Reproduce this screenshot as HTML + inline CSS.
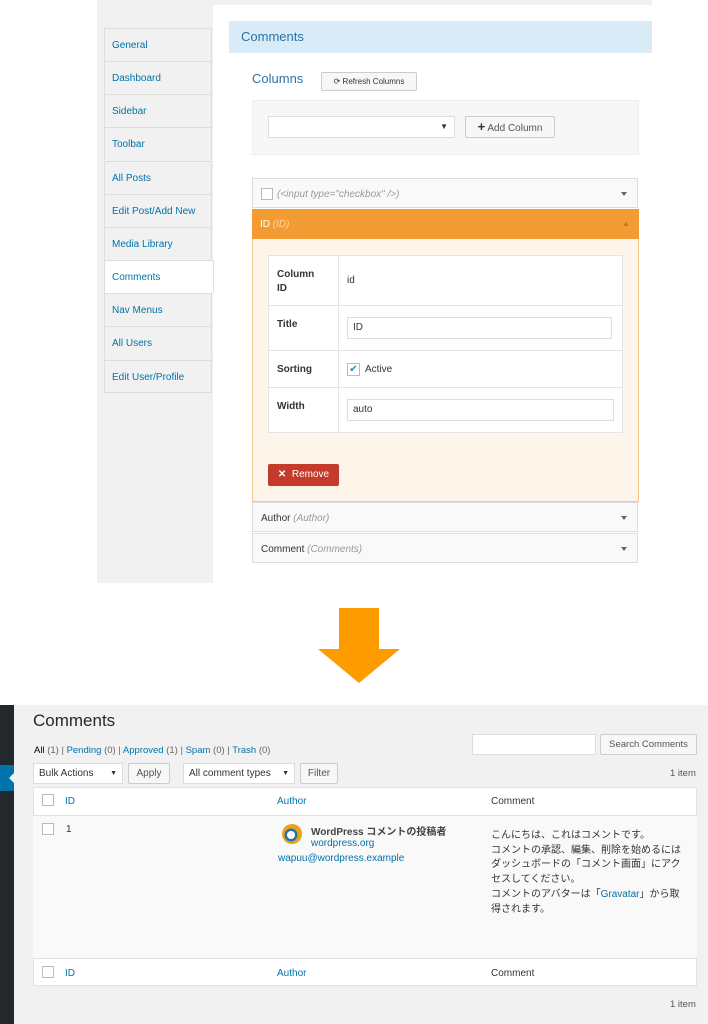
<!DOCTYPE html><html><head><meta charset="utf-8"><style>
body{margin:0;width:708px;height:1024px;position:relative;background:#fff;font-family:"Liberation Sans","Noto Sans CJK JP",sans-serif;font-size:10px;color:#333;overflow:hidden}
.a{position:absolute}
.menu{position:absolute;left:104px;width:108px;height:33px;border:1px solid #ddd;border-bottom:none;background:#f1f1f1;color:#0073aa;font-size:10px;line-height:34px;padding-left:7px;box-sizing:border-box}
.blue{color:#0073aa}
.btn{position:absolute;border:1px solid #ccc;background:#f7f7f7;border-radius:2px;box-sizing:border-box;font-size:10px;color:#555;text-align:center}
.inp{position:absolute;border:1px solid #ddd;background:#fff;box-sizing:border-box}
.cb{position:absolute;width:12px;height:12px;border:1px solid #bbb;background:#fff;box-sizing:border-box}
.row{position:absolute;left:252px;width:386px;height:30px;background:#f9f9f9;border:1px solid #ddd;box-sizing:border-box;font-size:10px;line-height:31px;padding-left:8px;color:#333}
.row i{color:#999}
.tri{position:absolute;right:10px;top:13px;width:0;height:0;border-left:3px solid transparent;border-right:3px solid transparent;border-top:4px solid #666}
td{border:1px solid #e5e5e5;font-size:10px;vertical-align:top}
</style></head><body>
<div class="a" style="left:97px;top:0;width:555px;height:583px;background:#f1f1f1"></div>
<div class="a" style="left:213px;top:5px;width:439px;height:578px;background:#fff"></div>
<div class="menu" style="top:28px">General</div>
<div class="menu" style="top:61px">Dashboard</div>
<div class="menu" style="top:94px">Sidebar</div>
<div class="menu" style="top:127px">Toolbar</div>
<div class="menu" style="top:161px">All Posts</div>
<div class="menu" style="top:194px">Edit Post/Add New</div>
<div class="menu" style="top:227px">Media Library</div>
<div class="menu" style="top:260px;background:#fff;width:110px">Comments</div>
<div class="menu" style="top:293px">Nav Menus</div>
<div class="menu" style="top:326px">All Users</div>
<div class="menu" style="top:360px;height:33px;border-bottom:1px solid #ddd">Edit User/Profile</div>
<div class="a" style="left:229px;top:21px;width:423px;height:32px;background:#d9ebf7;color:#2a72a8;font-size:13px;line-height:32px;padding-left:12px;box-sizing:border-box">Comments</div>
<div class="a blue" style="left:252px;top:71px;font-size:13px;color:#2a72a8">Columns</div>
<div class="btn" style="left:321px;top:72px;width:96px;height:19px;line-height:17px;font-size:8px;color:#333">⟳ Refresh Columns</div>
<div class="a" style="left:252px;top:100px;width:387px;height:55px;background:#f7f7f7;border:1px solid #eee;box-sizing:border-box"></div>
<div class="inp" style="left:268px;top:116px;width:187px;height:22px"><span class="a" style="right:6px;top:5px;font-size:8px">▼</span></div>
<div class="btn" style="left:465px;top:116px;width:90px;height:22px;line-height:20px;font-size:10px;color:#555"><b style="font-size:13px;color:#333">+</b> Add Column</div>
<div class="row" style="top:178px"><span class="cb" style="left:8px;top:9px"></span><span style="padding-left:16px"><i>(&lt;input type="checkbox" /&gt;)</i></span><span class="tri"></span></div>
<div class="a" style="left:252px;top:209px;width:387px;height:30px;background:#f39c33;color:#fff;font-size:10px;line-height:31px;padding-left:8px;box-sizing:border-box">ID <i style="color:#fbd7a8">(ID)</i><span class="a" style="right:10px;top:13px;border-left:3px solid transparent;border-right:3px solid transparent;border-bottom:4px solid #c9752a"></span></div>
<div class="a" style="left:252px;top:239px;width:387px;height:263px;background:#fdf4ea;border:1px solid #f7c48a;border-top:none;box-sizing:border-box"></div>
<table class="a" style="left:268px;top:255px;width:355px;border-collapse:collapse;background:#fff">
<tr style="height:50px"><td style="width:57px;padding:12px 8px 0;font-weight:bold;line-height:14px">Column<br>ID</td><td style="padding:19px 8px 0">id</td></tr>
<tr style="height:45px"><td style="padding:13px 8px 0;font-weight:bold">Title</td><td style="padding:11px 8px 0"><div style="border:1px solid #ddd;height:20px;line-height:20px;padding-left:5px;width:258px">ID</div></td></tr>
<tr style="height:37px"><td style="padding:13px 8px 0;font-weight:bold">Sorting</td><td style="padding:12px 8px 0"><span style="display:inline-block;width:11px;height:11px;border:1px solid #bbb;color:#1e8cbe;font-size:10px;line-height:11px;text-align:center;vertical-align:middle">✔</span>&nbsp; Active</td></tr>
<tr style="height:45px"><td style="padding:13px 8px 0;font-weight:bold">Width</td><td style="padding:11px 8px 0"><div style="border:1px solid #ddd;height:20px;line-height:20px;padding-left:5px;width:260px">auto</div></td></tr>
</table>
<div class="a" style="left:268px;top:464px;width:71px;height:22px;background:#c43a2b;border-radius:2px;color:#fff;font-size:10px;line-height:22px;text-align:center"><b>✕</b>&nbsp; Remove</div>
<div class="row" style="top:502px">Author <i>(Author)</i><span class="tri"></span></div>
<div class="row" style="top:533px">Comment <i>(Comments)</i><span class="tri"></span></div>
<svg class="a" style="left:318px;top:608px" width="82" height="76"><polygon points="21,0 61,0 61,41 82,41 41,75 0,41 21,41" fill="#fe9b00"/></svg>
<div class="a" style="left:0;top:705px;width:708px;height:319px;background:#f1f1f1"></div>
<div class="a" style="left:0;top:705px;width:14px;height:319px;background:#23282d"></div>
<div class="a" style="left:0;top:765px;width:14px;height:26px;background:#0073aa"></div>
<div class="a" style="left:9px;top:773px;border-top:5px solid transparent;border-bottom:5px solid transparent;border-right:5px solid #f1f1f1"></div>
<div class="a" style="left:33px;top:711px;font-size:17px;color:#23282d">Comments</div>
<div class="a" style="left:34px;top:745px;font-size:9.5px;color:#666"><b style="color:#000;font-weight:normal">All</b> (1) | <span class="blue">Pending</span> (0) | <span class="blue">Approved</span> (1) | <span class="blue">Spam</span> (0) | <span class="blue">Trash</span> (0)</div>
<div class="inp" style="left:472px;top:734px;width:124px;height:21px"></div>
<div class="btn" style="left:600px;top:734px;width:97px;height:21px;line-height:19px;font-size:9.5px">Search Comments</div>
<div class="inp" style="left:33px;top:763px;width:90px;height:21px;font-size:10px;line-height:19px;padding-left:5px;color:#333">Bulk Actions<span class="a" style="right:5px;top:0;font-size:7px">▼</span></div>
<div class="btn" style="left:128px;top:763px;width:42px;height:21px;line-height:19px">Apply</div>
<div class="inp" style="left:183px;top:763px;width:112px;height:21px;font-size:10px;line-height:19px;padding-left:5px;color:#333">All comment types<span class="a" style="right:5px;top:0;font-size:7px">▼</span></div>
<div class="btn" style="left:300px;top:763px;width:38px;height:21px;line-height:19px">Filter</div>
<div class="a" style="left:670px;top:768px;font-size:9.5px;color:#555">1 item</div>
<div class="a" style="left:33px;top:787px;width:664px;height:199px;background:#fff;border:1px solid #e1e1e1;box-sizing:border-box"></div>
<div class="a" style="left:33px;top:815px;width:664px;height:144px;background:#f9f9f9;border-top:1px solid #e1e1e1;border-bottom:1px solid #e1e1e1;box-sizing:border-box"></div>
<div class="cb" style="left:42px;top:794px"></div><div class="a blue" style="left:65px;top:796px;font-size:10px">ID</div>
<div class="a blue" style="left:277px;top:796px;font-size:10px">Author</div>
<div class="a" style="left:491px;top:796px;font-size:10px">Comment</div>
<div class="cb" style="left:42px;top:823px"></div><div class="a" style="left:66px;top:824px;font-size:10px">1</div>
<svg class="a" style="left:280px;top:822px" width="24" height="24"><circle cx="12" cy="12" r="10" fill="#e8a317"/><circle cx="11" cy="13" r="6.5" fill="#2a6fb0"/><circle cx="11" cy="13" r="4" fill="#fff"/></svg>
<div class="a" style="left:311px;top:823px;font-size:10px;font-weight:bold;color:#444">WordPress コメントの投稿者</div>
<div class="a blue" style="left:311px;top:838px;font-size:10px">wordpress.org</div>
<div class="a blue" style="left:278px;top:853px;font-size:10px">wapuu@wordpress.example</div>
<div class="a" style="left:491px;top:829px;font-size:10px;line-height:14.7px;width:200px">こんにちは、これはコメントです。<br>コメントの承認、編集、削除を始めるには<br>ダッシュボードの「コメント画面」にアク<br>セスしてください。<br>コメントのアバターは「<span class="blue">Gravatar</span>」から取<br>得されます。</div>
<div class="cb" style="left:42px;top:966px"></div><div class="a blue" style="left:65px;top:968px;font-size:10px">ID</div>
<div class="a blue" style="left:277px;top:968px;font-size:10px">Author</div>
<div class="a" style="left:491px;top:968px;font-size:10px">Comment</div>
<div class="a" style="left:670px;top:999px;font-size:9.5px;color:#555">1 item</div>
</body></html>
